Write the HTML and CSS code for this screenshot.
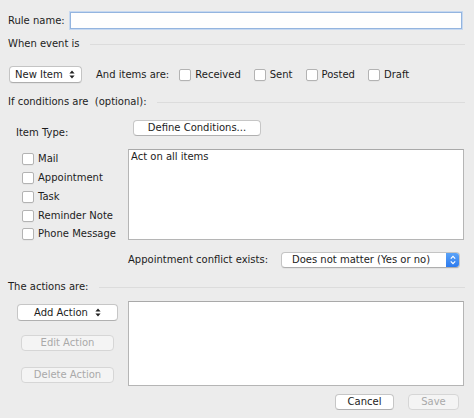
FILE: index.html
```html
<!DOCTYPE html>
<html>
<head>
<meta charset="utf-8">
<link rel="stylesheet" href="styles.css">
</head>
<body>
<div class="win">
  <div class="name-row">
    <label class="lbl">Rule name:</label>
    <div class="field"></div>
  </div>

  <div class="section s-event"><span>When event is</span><i class="rule"></i></div>

  <div class="event-row">
    <div class="popup new-item">New Item
      <svg class="updown" width="6" height="9" viewBox="0 0 6 9"><path d="M3 0.5 L5.6 3.6 H0.4 Z M3 8.5 L5.6 5.4 H0.4 Z" fill="#222"/></svg>
    </div>
    <span class="lbl items-lbl">And items are:</span>
    <div class="checks">
      <label class="check"><span class="box"></span>Received</label>
      <label class="check"><span class="box"></span>Sent</label>
      <label class="check"><span class="box"></span>Posted</label>
      <label class="check"><span class="box"></span>Draft</label>
    </div>
  </div>

  <div class="section s-cond"><span>If conditions are&nbsp; (optional):</span><i class="rule"></i></div>

  <div class="cond">
    <div class="cond-left">
      <div class="lbl item-type">Item Type:</div>
      <div class="type-list">
        <label class="check row"><span class="box"></span>Mail</label>
        <label class="check row"><span class="box"></span>Appointment</label>
        <label class="check row"><span class="box"></span>Task</label>
        <label class="check row"><span class="box"></span>Reminder Note</label>
        <label class="check row"><span class="box"></span>Phone Message</label>
      </div>
    </div>
    <div class="cond-right">
      <div class="btn define">Define Conditions...</div>
      <div class="list cond-list">Act on all items</div>
    </div>
  </div>

  <div class="conflict-row">
    <span class="lbl conflict-lbl">Appointment conflict exists:</span>
    <div class="popup conflict">
      <span class="popup-text">Does not matter (Yes or no)</span>
      <span class="stepper">
        <svg width="6" height="10" viewBox="0 0 6 10"><path d="M0.8 3.6 L3 1.4 L5.2 3.6 M0.8 6.4 L3 8.6 L5.2 6.4" fill="none" stroke="#fff" stroke-width="1.2"/></svg>
      </span>
    </div>
  </div>

  <div class="section s-act"><span>The actions are:</span><i class="rule"></i></div>

  <div class="actions">
    <div class="act-buttons">
      <div class="btn add">Add Action
        <svg class="updown" width="6" height="9" viewBox="0 0 6 9"><path d="M3 0.5 L5.6 3.6 H0.4 Z M3 8.5 L5.6 5.4 H0.4 Z" fill="#222"/></svg>
      </div>
      <div class="btn disabled edit">Edit Action</div>
      <div class="btn disabled del">Delete Action</div>
    </div>
    <div class="list act-list"></div>
  </div>

  <div class="footer">
    <div class="btn cancel">Cancel</div>
    <div class="btn disabled save">Save</div>
  </div>
</div>
</body>
</html>
```

FILE: styles.css
```css
html, body {
  margin: 0;
  padding: 0;
  background: #ececec;
}
body {
  font-family: "DejaVu Sans", "Noto Sans", sans-serif;
  font-size: 10px;
  color: #1c1c1c;
}
.win {
  width: 474px;
  height: 418px;
  padding-top: 12px;
  box-sizing: border-box;
}
.lbl {
  line-height: 12px;
  white-space: nowrap;
}

/* rule name */
.name-row {
  display: flex;
  align-items: center;
  padding-left: 8px;
  height: 17px;
}
.field {
  margin-left: 5px;
  width: 392px;
  height: 17px;
  box-sizing: border-box;
  background: #fefefe;
  border: 1px solid #93b4df;
  box-shadow: 0 0 0 1px #c6d8f0;
}

/* section headers */
.section {
  display: flex;
  align-items: center;
  padding-left: 8px;
  padding-right: 9px;
  height: 14px;
  line-height: 12px;
  white-space: nowrap;
}
.rule {
  flex: 1;
  height: 1px;
  background: #dcdcdc;
  margin-left: 10px;
}
.s-event { margin-top: 8px; }
.s-cond { margin-top: 12px; }
.s-act { margin-top: 12px; }

/* popups */
.popup {
  display: flex;
  align-items: center;
  height: 17px;
  box-sizing: border-box;
  background: #fff;
  border: 1px solid #c4c4c4;
  border-bottom-color: #aeaeae;
  border-radius: 4px;
  box-shadow: 0 1px 0 rgba(0,0,0,0.04);
  line-height: 12px;
  white-space: nowrap;
}
.updown {
  display: block;
}

/* event row */
.event-row {
  display: flex;
  align-items: center;
  margin-top: 15px;
  padding-left: 9px;
  height: 17px;
}
.new-item {
  width: 73px;
  padding-left: 5px;
}
.new-item .updown {
  margin-left: 6px;
}
.items-lbl {
  margin-left: 14px;
}
.checks {
  display: flex;
  gap: 13px;
  margin-left: 10px;
}
.check {
  display: flex;
  align-items: center;
  line-height: 12px;
  white-space: nowrap;
}
.box {
  width: 12px;
  height: 12px;
  box-sizing: border-box;
  background: #fff;
  border: 1px solid #b3b3b3;
  border-radius: 2px;
  margin-right: 4px;
  box-shadow: 0 1px 0 rgba(0,0,0,0.03);
}

/* conditions */
.cond {
  display: flex;
  margin-top: 11px;
  height: 120px;
}
.cond-left {
  width: 128px;
}
.item-type {
  margin-left: 16px;
  margin-top: 7px;
}
.type-list {
  margin-top: 11px;
  padding-left: 22px;
}
.check.row {
  height: 18.75px;
}
.cond-right {
  display: flex;
  flex-direction: column;
}
.btn {
  display: flex;
  align-items: center;
  justify-content: center;
  box-sizing: border-box;
  background: #fff;
  border: 1px solid #c6c6c6;
  border-bottom-color: #b0b0b0;
  border-radius: 4px;
  line-height: 12px;
  white-space: nowrap;
}
.btn.disabled {
  background: #f4f4f4;
  border-color: #d6d6d6;
  color: #a9a9a9;
}
.define {
  margin-left: 5px;
  width: 128px;
  height: 16px;
}
.list {
  box-sizing: border-box;
  background: #fff;
  border: 1px solid #b5b5b5;
  border-top-color: #a9a9a9;
}
.cond-list {
  margin-top: 13px;
  width: 336px;
  height: 91px;
  padding: 1px 2px;
  line-height: 12px;
}

/* conflict */
.conflict-row {
  display: flex;
  align-items: center;
  margin-top: 12px;
  padding-left: 128px;
  height: 16px;
}
.conflict-lbl {
  flex: 0 0 147px;
}
.conflict {
  margin-left: 6px;
  width: 179px;
  height: 16px;
  overflow: hidden;
}
.popup-text {
  flex: 1;
  padding-left: 10px;
}
.stepper {
  width: 14px;
  height: 16px;
  margin-right: -1px;
  background: linear-gradient(#5ea6f8, #2a78ee);
  border-radius: 0 4px 4px 0;
  display: flex;
  align-items: center;
  justify-content: center;
}

/* actions */
.actions {
  display: flex;
  margin-top: 7px;
}
.act-buttons {
  width: 128px;
  display: flex;
  flex-direction: column;
  padding-top: 3px;
}
.add {
  margin-left: 17px;
  width: 101px;
  height: 17px;
}
.add .updown {
  margin-left: 7px;
}
.edit, .del {
  margin-left: 21px;
  width: 93px;
  height: 16px;
}
.edit { margin-top: 14px; }
.del { margin-top: 16px; }
.act-list {
  width: 336px;
  height: 85px;
}

/* footer */
.footer {
  display: flex;
  justify-content: flex-end;
  gap: 14px;
  margin-top: 8px;
  padding-right: 15px;
}
.cancel {
  width: 59px;
  height: 16px;
}
.save {
  width: 51px;
  height: 16px;
}
```
